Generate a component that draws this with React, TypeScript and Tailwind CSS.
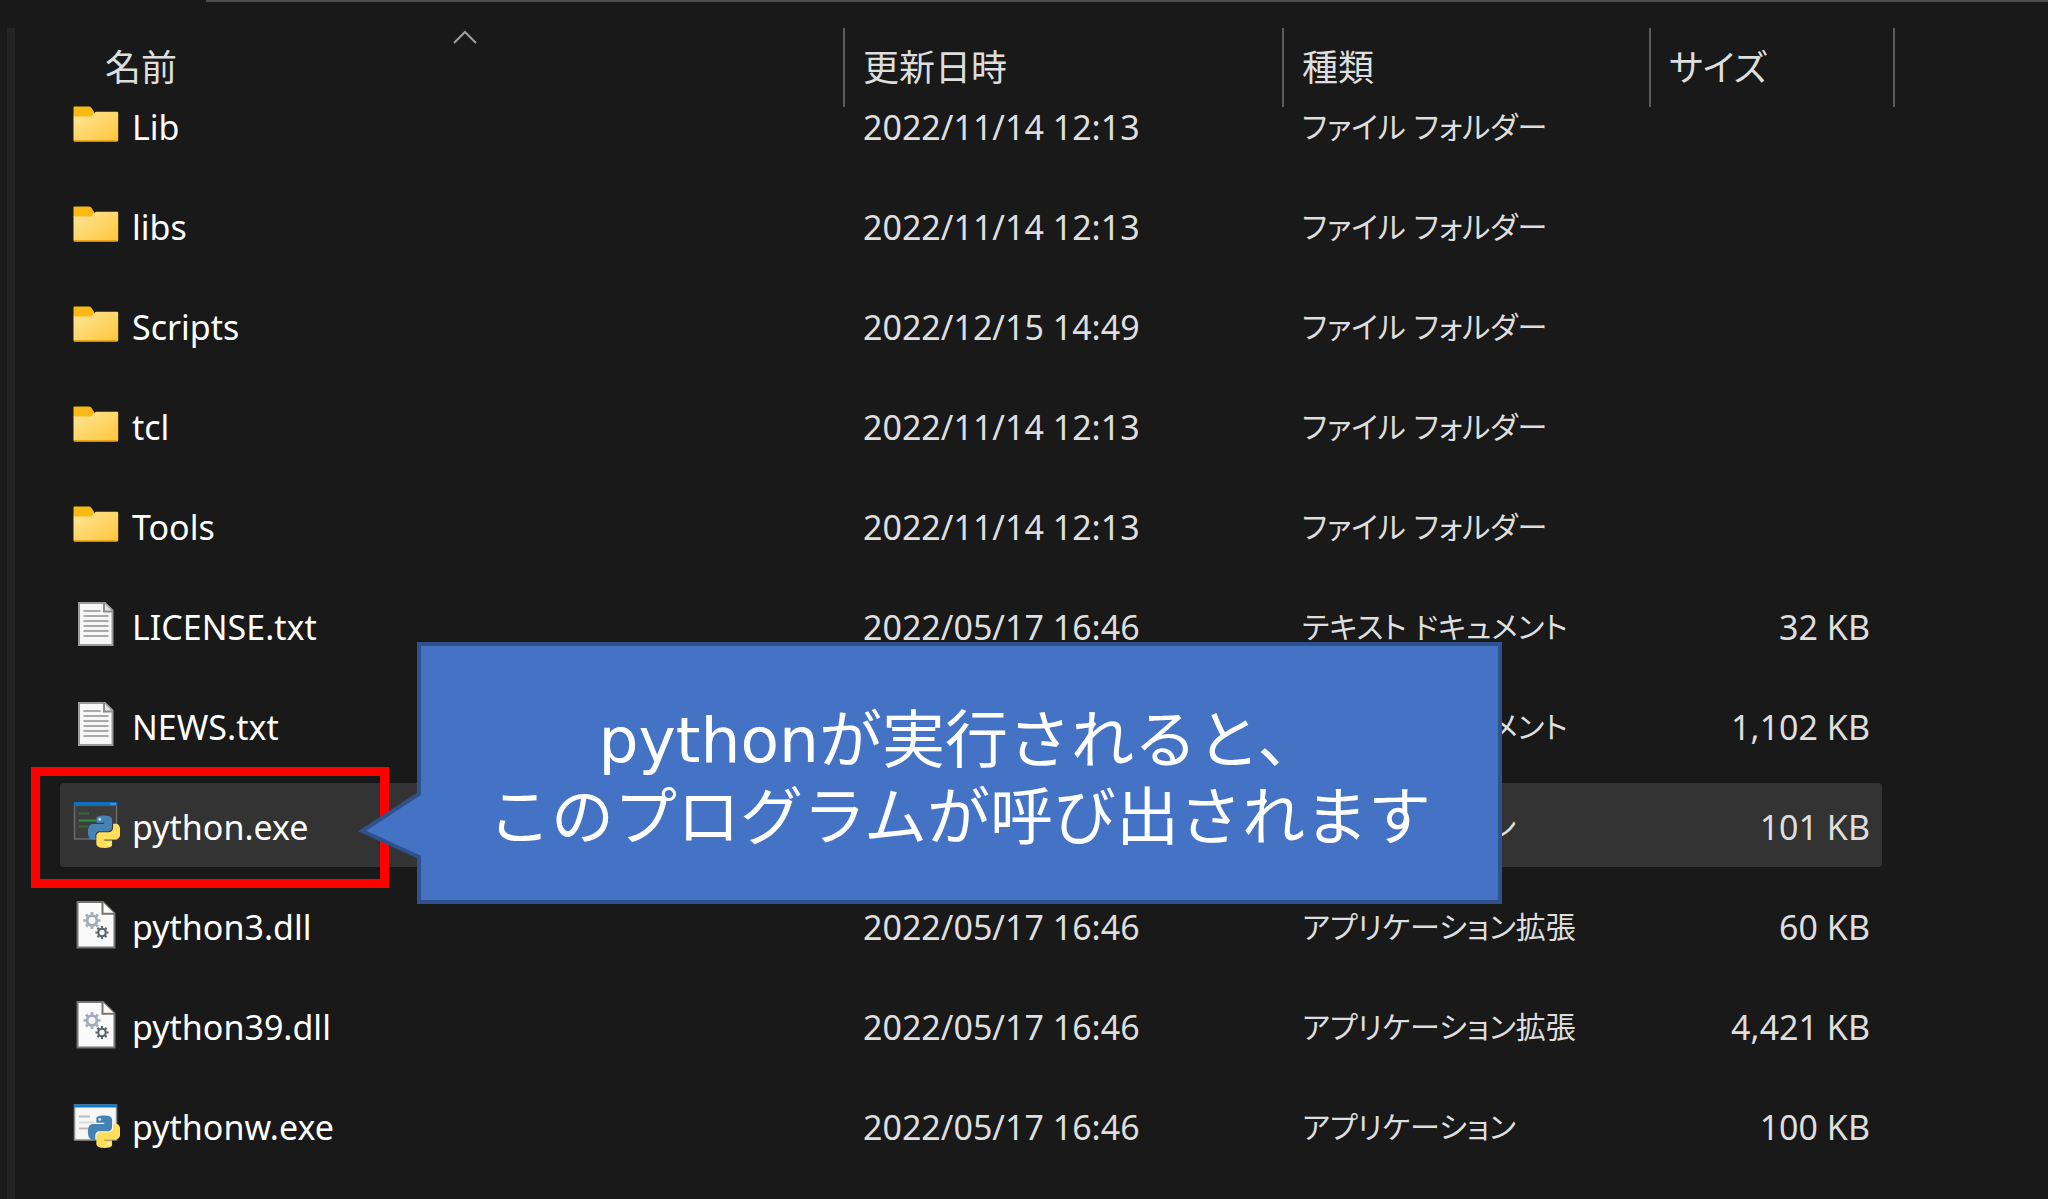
type IconKind = "folder" | "text" | "console" | "library" | "window";

type FileEntry = {
  name: string;
  modified: string;
  kind: string;
  size?: string;
  icon: IconKind;
  active?: boolean;
};

const files: FileEntry[] = [
  { name: "Lib", modified: "2022/11/14 12:13", kind: "ファイル フォルダー", icon: "folder" },
  { name: "libs", modified: "2022/11/14 12:13", kind: "ファイル フォルダー", icon: "folder" },
  { name: "Scripts", modified: "2022/12/15 14:49", kind: "ファイル フォルダー", icon: "folder" },
  { name: "tcl", modified: "2022/11/14 12:13", kind: "ファイル フォルダー", icon: "folder" },
  { name: "Tools", modified: "2022/11/14 12:13", kind: "ファイル フォルダー", icon: "folder" },
  { name: "LICENSE.txt", modified: "2022/05/17 16:46", kind: "テキスト ドキュメント", size: "32 KB", icon: "text" },
  { name: "NEWS.txt", modified: "2022/05/17 16:46", kind: "テキスト ドキュメント", size: "1,102 KB", icon: "text" },
  { name: "python.exe", modified: "2022/05/17 16:46", kind: "アプリケーション", size: "101 KB", icon: "console", active: true },
  { name: "python3.dll", modified: "2022/05/17 16:46", kind: "アプリケーション拡張", size: "60 KB", icon: "library" },
  { name: "python39.dll", modified: "2022/05/17 16:46", kind: "アプリケーション拡張", size: "4,421 KB", icon: "library" },
  { name: "pythonw.exe", modified: "2022/05/17 16:46", kind: "アプリケーション", size: "100 KB", icon: "window" },
];

function FolderIcon() {
  return (
    <svg viewBox="0 0 48 48" className="size-12 shrink-0" aria-hidden="true">
      <defs>
        <linearGradient id="folder-front" x1="0" y1="0" x2="1" y2="1">
          <stop offset="0" stopColor="#ffe69b" />
          <stop offset="1" stopColor="#fdc638" />
        </linearGradient>
      </defs>
      <path d="M2.5 5.5h14.5a3 3 0 0 1 2.2 1l3 4.5v5H1.5V6.5a1 1 0 0 1 1-1z" fill="#fcb913" />
      <path
        d="M1.5 15.5h16.5c1 0 1.6-.3 2.3-1l2.5-3c.6-.6 1-.8 2-.8H45a1.2 1.2 0 0 1 1.2 1.2V39a1.5 1.5 0 0 1-1.5 1.5H3A1.5 1.5 0 0 1 1.5 39z"
        fill="url(#folder-front)"
      />
      <path d="M2 39.7h43.5" stroke="#e8a51c" strokeWidth="1.5" />
    </svg>
  );
}

function TextIcon() {
  return (
    <svg viewBox="0 0 48 48" className="size-12 shrink-0" aria-hidden="true">
      <path d="M7 2h26l7.5 7.5V44H7z" fill="#f7f7f7" stroke="#9b9b9b" strokeWidth="2" />
      <path d="M32 2v8.5h8.5" fill="#e2e2e2" stroke="#8d8d8d" strokeWidth="2" />
      <path d="M11.5 10h17M11.5 15h25M11.5 20h25M11.5 25h25M11.5 30h25M11.5 35h25" stroke="#a9a9a9" strokeWidth="2" />
    </svg>
  );
}

function Gear({ cx, cy, r, color }: { cx: number; cy: number; r: number; color: string }) {
  return (
    <g fill="none" stroke={color}>
      <circle cx={cx} cy={cy} r={r * 0.58} strokeWidth={r * 0.34} />
      <circle cx={cx} cy={cy} r={r * 0.84} strokeWidth={r * 0.32} pathLength={16} strokeDasharray="1 1" strokeDashoffset={0.5} />
    </g>
  );
}

function LibraryIcon() {
  return (
    <svg viewBox="0 0 48 48" className="size-12 shrink-0" aria-hidden="true">
      <path d="M5.5 1H31l11.5 11.5v34h-37z" fill="#fafafa" stroke="#77736f" strokeWidth="2" />
      <path d="M30.5 1v11.8h12" fill="#fff" stroke="#77736f" strokeWidth="2" />
      <Gear cx={20} cy={19.5} r={8.5} color="#a4adb6" />
      <Gear cx={30} cy={31.5} r={6.5} color="#58636a" />
    </svg>
  );
}

function PythonMark() {
  return (
    <g transform="translate(16 14.5) scale(1.35)">
      <path
        d="M14.25.18l.9.2.73.26.59.3.45.32.34.34.25.34.16.33.1.3.04.26.02.2-.01.13V8.5l-.05.63-.13.55-.21.46-.26.38-.3.31-.33.25-.35.19-.35.14-.33.1-.3.07-.26.04-.21.02H8.77l-.69.05-.59.14-.5.22-.41.27-.33.32-.27.35-.2.36-.15.37-.1.35-.07.32-.04.27-.02.21v3.06H3.17l-.21-.03-.28-.07-.32-.12-.35-.18-.36-.26-.36-.36-.35-.46-.32-.59-.28-.73-.21-.88-.14-1.05-.05-1.23.06-1.22.16-1.04.24-.87.32-.71.36-.57.4-.44.42-.33.42-.24.4-.16.36-.1.32-.05.24-.01h.16l.06.01h8.16v-.83H6.18l-.01-2.75-.02-.37.05-.34.11-.31.17-.28.25-.26.31-.23.38-.2.44-.18.51-.15.58-.12.64-.1.71-.06.77-.04.84-.02 1.27.05z"
        fill="#4583b5"
      />
      <path
        d="M21.04 6.11l.28.06.32.12.35.18.36.27.36.35.35.47.32.59.28.73.21.88.14 1.04.05 1.23-.06 1.23-.16 1.04-.24.86-.32.71-.36.57-.4.45-.42.33-.42.24-.4.16-.36.09-.32.05-.24.02-.16-.01h-8.22v.82h5.84l.01 2.76.02.36-.05.34-.11.31-.17.29-.25.25-.31.24-.38.2-.44.17-.51.15-.58.13-.64.09-.71.07-.77.04-.84.01-1.27-.04-1.07-.14-.9-.2-.73-.25-.59-.3-.45-.33-.34-.34-.25-.34-.16-.33-.1-.3-.04-.25-.02-.2.01-.13v-5.34l.05-.64.13-.54.21-.46.26-.38.3-.32.33-.24.35-.2.35-.14.33-.1.3-.06.26-.04.21-.02.13-.01h5.84l.69-.05.59-.14.5-.21.41-.28.33-.32.27-.35.2-.36.15-.36.1-.35.07-.32.04-.28.02-.21V6.07h2.09z"
        fill="#ffdf5a"
      />
      <circle cx="8.7" cy="2.9" r="1" fill="#dbe8f3" />
      <circle cx="15.3" cy="21.1" r="1" fill="#fff6cf" />
    </g>
  );
}

function ConsoleIcon() {
  return (
    <svg viewBox="0 0 48 48" className="size-12 shrink-0" aria-hidden="true">
      <rect x="2.5" y="2" width="42" height="36" fill="#3d3d3d" stroke="#6a6a6a" strokeWidth="1.5" />
      <path d="M2 3h43" stroke="#0f70c0" strokeWidth="4" />
      <path d="M38 3h6" stroke="#5a9bd2" strokeWidth="1.5" />
      <path d="M7 12.5h10M7 25.5h9" stroke="#33693a" strokeWidth="2" />
      <path d="M7 19.5h17" stroke="#2f9a37" strokeWidth="2" />
      <PythonMark />
    </svg>
  );
}

function WindowIcon() {
  return (
    <svg viewBox="0 0 48 48" className="size-12 shrink-0" aria-hidden="true">
      <rect x="2.5" y="4" width="42" height="35" fill="#f6f6f6" stroke="#8c8c8c" strokeWidth="1.5" />
      <path d="M2 5h43" stroke="#0f7ad2" strokeWidth="3" />
      <path d="M7 15.5h11M7 27.5h10" stroke="#bcbcbc" strokeWidth="2" />
      <path d="M7 21.5h15" stroke="#dadada" strokeWidth="2" />
      <PythonMark />
    </svg>
  );
}

const icons: Record<IconKind, () => React.ReactElement> = {
  folder: FolderIcon,
  text: TextIcon,
  console: ConsoleIcon,
  library: LibraryIcon,
  window: WindowIcon,
};

function Callout() {
  return (
    <div className="absolute left-[357px] right-[380px] top-[-141px] flex h-[262px] items-center justify-center border-4 border-[#2f528f] bg-[#4472c4]">
      {/* Tail */}
      <svg viewBox="0 0 66 72" className="absolute -left-16 top-[143px] h-[72px] w-[66px]" aria-hidden="true">
        <path d="M66 4h-2L5 42l59 26h2z" fill="#4472c4" />
        <path d="M62 0v5L5 42l57 26v4" fill="none" stroke="#2f528f" strokeWidth="4" />
        <path d="M62 7.5V66h4V7.5z" fill="#4472c4" />
      </svg>
      <p className="pt-3 text-center font-['DejaVu_Sans','Noto_Sans_CJK_JP',sans-serif] text-[63px] leading-[77px] whitespace-nowrap text-white [font-feature-settings:normal]">
        pythonが実行されると、
        <br />
        このプログラムが呼び出されます
      </p>
    </div>
  );
}

function FileRow({ file }: { file: FileEntry }) {
  const Icon = icons[file.icon];

  return (
    <tr
      className={`relative mr-[13px] mb-4 grid h-[84px] grid-cols-[1fr_439px_367px_231px] items-center rounded ${
        file.active ? "bg-[#333333]" : ""
      }`}
    >
      <td className="flex items-center gap-3 pl-3 text-white">
        <Icon />
        <span className="pt-1">{file.name}</span>
      </td>
      <td className="pt-1 pl-[18px]">{file.modified}</td>
      <td className="pt-1 pl-[18px] text-[30px]">{file.kind}</td>
      <td className="pt-1 pr-3 text-right">
        {file.size}
        {file.active && (
          <>
            {/* Red frame and callout that point at this file */}
            <span className="absolute -left-[29px] -top-4 h-[121px] w-[358px] border-[9px] border-[#ff0000]" />
            <div className="absolute inset-0 text-left">
              <Callout />
            </div>
          </>
        )}
      </td>
    </tr>
  );
}

export default function App() {
  return (
    <div className="flex min-h-screen flex-col bg-[#191919] font-['Noto_Sans','Noto_Sans_CJK_JP',sans-serif] text-[34px] leading-[48px] text-[#dedede] [font-feature-settings:'palt']">
      <div className="ml-[206px] h-0.5 bg-[#4d4d4d]" />
      <div className="mt-[26px] flex flex-1">
        <div className="ml-[7px] w-2 bg-[#242424]" />
        <table className="mr-[153px] ml-[45px] block flex-1">
          <thead className="block">
            <tr className="grid h-[55px] grid-cols-[1fr_439px_367px_244px] items-start text-[36px]">
              <th className="relative ml-[27px] h-[79px] border-r-2 border-[#5c5c5c] pt-4 pl-[18px] text-left font-normal">
                <svg viewBox="0 0 24 14" className="absolute inset-x-0 top-0.5 mx-auto h-3.5 w-6" aria-hidden="true">
                  <path d="M1 13 12 2l11 11" fill="none" stroke="#a0a0a0" strokeWidth="2" />
                </svg>
                名前
              </th>
              <th className="h-[79px] border-r-2 border-[#5c5c5c] pt-4 pl-[18px] text-left font-normal">更新日時</th>
              <th className="h-[79px] border-r-2 border-[#5c5c5c] pt-4 pl-[18px] text-left font-normal">種類</th>
              <th className="h-[79px] border-r-2 border-[#5c5c5c] pt-4 pl-[18px] text-left font-normal">サイズ</th>
            </tr>
          </thead>
          <tbody className="block">
            {files.map((file) => (
              <FileRow key={file.name} file={file} />
            ))}
          </tbody>
        </table>
      </div>
    </div>
  );
}
